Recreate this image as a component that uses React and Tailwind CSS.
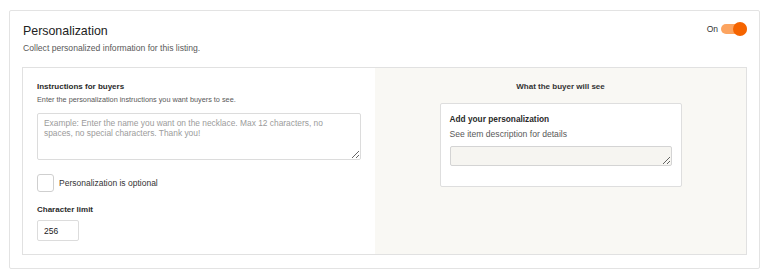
import React, { useState } from 'react';

const Toggle = ({ on, onChange }) => (
    <button
        type="button"
        onClick={() => onChange(!on)}
        className="relative flex items-center w-[26px] h-[14px]"
    >
        <span className={`block w-full h-[10px] rounded-full ${on ? 'bg-[#fca460]' : 'bg-[#d5d5d5]'}`} />
        <span className={`absolute top-0 w-[14px] h-[14px] rounded-full ${on ? 'right-0 bg-[#f56400]' : 'left-0 bg-white border border-[#ccc]'}`} />
    </button>
);

const App = () => {
    const [enabled, setEnabled] = useState(true);
    const [optional, setOptional] = useState(false);
    const [limit, setLimit] = useState('256');

    return (
        <div className="w-full h-[280px] bg-white pl-[9px] pr-[8px] pt-[10px] font-['Liberation_Sans',Arial,sans-serif] text-[#222]">
            <div className="border border-[#e3e3e3] rounded-[2px] px-[12px] pt-[12px] pb-[13px]">
                {/* Header */}
                <div className="flex justify-between items-start">
                    <div>
                        <h2 className="text-[12.4px] leading-[16px] pl-[1px]">Personalization</h2>
                        <p className="mt-[3px] text-[8.6px] leading-[12px] text-[#595959] pl-[1px]">
                            Collect personalized information for this listing.
                        </p>
                    </div>
                    <div className="flex items-center gap-[3px] h-[14px] -mt-[1px]">
                        <span className="text-[8.5px] leading-[12px] text-[#333]">{enabled ? 'On' : 'Off'}</span>
                        <Toggle on={enabled} onChange={setEnabled} />
                    </div>
                </div>

                {/* Body */}
                <div className="mt-[13px] flex h-[188px] border border-[#e1e1e1]">
                    <div className="w-[352px] shrink-0 pl-[14px] pr-[14px] pt-[13px]">
                        <div className="text-[8px] leading-[12px] font-bold text-[#2a2a2a]">Instructions for buyers</div>
                        <div className="mt-[2px] text-[7.3px] leading-[10px] text-[#595959]">
                            Enter the personalization instructions you want buyers to see.
                        </div>
                        <textarea
                            className="mt-[8px] block w-[324px] h-[47px] border border-[#dcdcdc] rounded-[2px] px-[6px] pt-[4px] text-[8.4px] leading-[10px] placeholder:text-[#9b9b9b] outline-none"
                            placeholder={'Example: Enter the name you want on the necklace. Max 12 characters, no\nspaces, no special characters. Thank you!'}
                        />
                        <label className="mt-[14px] flex items-center gap-[5px] cursor-pointer">
                            <button
                                type="button"
                                onClick={() => setOptional(!optional)}
                                className={`w-[17px] h-[18px] rounded-[3px] border ${optional ? 'border-[#222] bg-[#222]' : 'border-[#cfcfcf] bg-white'}`}
                            />
                            <span className="text-[8.5px] leading-[12px] text-[#333]">Personalization is optional</span>
                        </label>
                        <div className="mt-[12px] text-[8px] leading-[12px] font-bold text-[#2a2a2a]">Character limit</div>
                        <input
                            value={limit}
                            onChange={(e) => setLimit(e.target.value)}
                            className="mt-[4px] block w-[42px] h-[21px] border border-[#dcdcdc] rounded-[2px] pl-[6px] text-[8.5px] text-[#222] outline-none"
                        />
                    </div>

                    {/* Preview */}
                    <div className="flex-1 bg-[#f9f8f4] pt-[13px] flex flex-col items-center">
                        <div className="text-[8px] leading-[12px] font-bold text-[#333]">What the buyer will see</div>
                        <div className="mt-[10px] w-[242px] h-[84px] bg-white border border-[#dedede] rounded-[2px] px-[9px] pt-[9px]">
                            <div className="text-[8.3px] leading-[12px] font-bold text-[#2a2a2a]">Add your personalization</div>
                            <div className="mt-[3px] text-[8.6px] leading-[12px] text-[#595959]">See item description for details</div>
                            <textarea
                                readOnly
                                className="mt-[6px] block w-[222px] h-[20px] bg-[#f6f5f1] border border-[#d4d4d4] rounded-[2px] outline-none"
                            />
                        </div>
                    </div>
                </div>
            </div>
        </div>
    );
};

export default App;
